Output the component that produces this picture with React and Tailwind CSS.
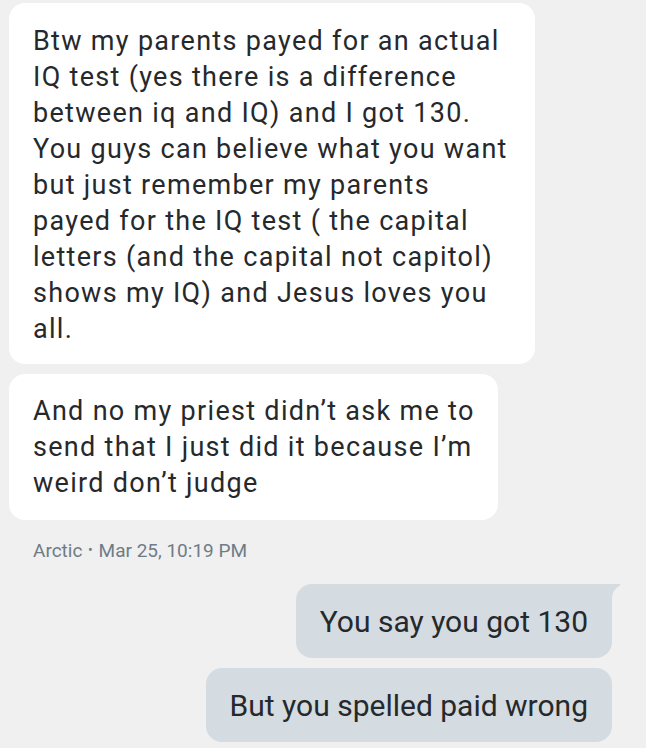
import React from 'react';

const incoming = [
  [
    'Btw my parents payed for an actual',
    'IQ test (yes there is a difference',
    'between iq and IQ) and I got 130.',
    'You guys can believe what you want',
    'but just remember my parents',
    'payed for the IQ test ( the capital',
    'letters (and the capital not capitol)',
    'shows my IQ) and Jesus loves you',
    'all.',
  ],
  [
    'And no my priest didn\u2019t ask me to',
    'send that I just did it because I\u2019m',
    'weird don\u2019t judge',
  ],
];

const Bubble = ({ lines, className }) => (
  <div className={`bg-white rounded-[16px] pl-6 text-[27px] leading-[36px] tracking-[1.3px] ${className}`}>
    {lines.map((line, i) => (
      <div key={i} className="whitespace-nowrap">{line}</div>
    ))}
  </div>
);

export default function App() {
  return (
    <div
      className="w-[646px] h-[748px] overflow-hidden bg-[#f0f0f0] text-[#26292c]"
      style={{ fontFamily: 'Roboto, "Noto Sans", sans-serif' }}
    >
      <div className="flex flex-col pl-[9px] pt-[3px]">
        <Bubble lines={incoming[0]} className="w-[526px] pt-[20px] pb-[17px]" />
        <Bubble lines={incoming[1]} className="w-[489px] mt-[10px] pt-[19px] pb-[19px]" />
        <div className="pl-6 mt-[18px] text-[19px] leading-[24px] text-[#6f7c87]">
          Arctic <span className="text-[14px] align-[2px] px-[1px]">•</span> Mar 25, 10:19 PM
        </div>
      </div>

      <div className="flex flex-col items-end pr-[34px] mt-[21px] gap-[10px]">
        <div className="relative">
          <div className="bg-[#d4dbe1] rounded-[16px] rounded-tr-none h-[74px] px-6 flex items-center text-[30px]">
            You say you got 130
          </div>
          <svg className="absolute top-0 -right-[10px]" width="12" height="14" viewBox="0 0 12 14">
            <path d="M0 0 H10 Q11 0 10 1.5 Q2 6 2 14 H0 Z" fill="#d4dbe1" />
          </svg>
        </div>
        <div className="bg-[#d4dbe1] rounded-[16px] h-[74px] px-6 flex items-center text-[30px]">
          But you spelled paid wrong
        </div>
      </div>
    </div>
  );
}
